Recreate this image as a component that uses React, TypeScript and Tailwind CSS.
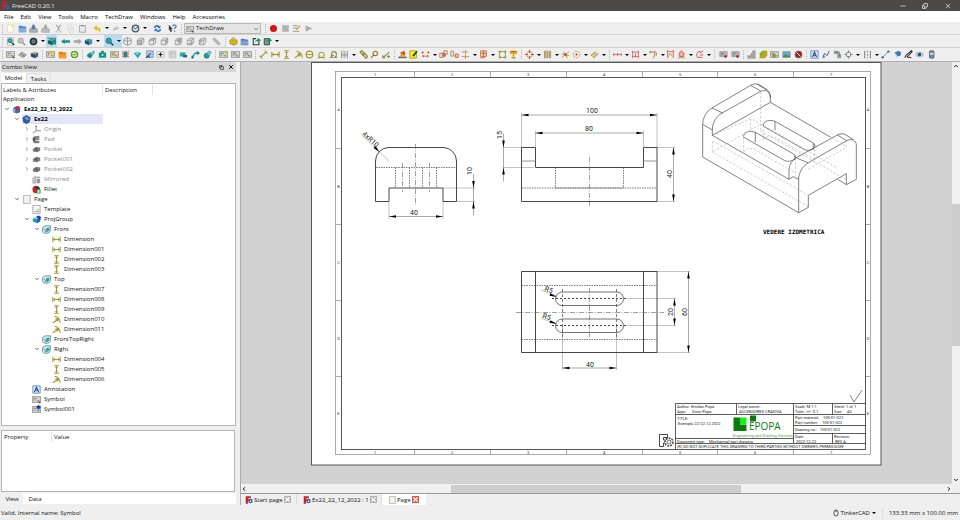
import React, { useState } from 'react';
import { ChevronDown, ChevronRight, ChevronLeft, ChevronUp, Minus, X, Copy } from 'lucide-react';

const cube = (a: string, b: string, c: string) => (
  <>
    <path d="M1 4l4-2 5 1-4 2z" fill={a} />
    <path d="M1 4l5 1v5l-5-2z" fill={b} />
    <path d="M6 5l4-2v5l-4 2z" fill={c} />
  </>
);

const wireCube = (face: string) => (
  <>
    <path d="M1.500 4l3-2.500h5v5l-2.500 3H1.500z" fill="#e3e3e3" />
    <path d={face} fill="#b3b3b3" />
    <path d="M1.500 4l3-2.500h5v5l-2.500 3H1.500zM1.500 4h5.500v5.500M7 4l2.500-2.500" fill="none" stroke="#909090" strokeWidth="0.900" />
  </>
);

const sheet = (
  <>
    <rect x="0.500" y="2" width="10" height="7" fill="#d4d4cf" stroke="#979792" />
    <path d="M2 4h4M2 6h2M6 7h3" stroke="#77776f" fill="none" />
  </>
);

const icons: Record<string, React.ReactNode> = {
  new: <><path d="M2 1h7v9H2z" fill="#fffdf0" stroke="#e0dcc4" /><circle cx="8" cy="2.500" r="1.500" fill="#f7e36a" /></>,
  open: <><path d="M1 2h4l1 1h4v7H1z" fill="#5585bb" /><path d="M1 5h9v5H1z" fill="#86afdc" /></>,
  save: <><path d="M1 6h9v4H1z" fill="#b5b5b0" stroke="#8a8a8a" /><path d="M4 1h3v3h2L5.500 7 2 4h2z" fill="#3d77b8" /></>,
  saveGrey: <><path d="M1 6h9v4H1z" fill="#c4c4c4" stroke="#a0a0a0" /><path d="M4 1h3v3h2L5.500 7 2 4h2z" fill="#a5a5a5" /></>,
  cut: <path d="M3 1l4 7M8 1L4 8M2 9.500h2M7 9.500h2" stroke="#a2a2a2" strokeWidth="1.300" fill="none" />,
  copy: <path d="M2 1h5v6H2zM4 4h5v6H4z" fill="#f2f2f2" stroke="#dadada" />,
  paste: <><path d="M2 2h7v8H2z" fill="#eee" stroke="#9a9a9a" /><path d="M4 1h3v2H4z" fill="#999" /></>,
  undo: <path d="M1 5l3-3v2c4 0 6 2 4 6 0-3-2-3-4-3v1z" fill="#e8c420" stroke="#c9a312" strokeWidth="0.500" />,
  redo: <path d="M10 5L7 2v2C3 4 1 6 3 10c0-3 2-3 4-3v1z" fill="#c2c2c2" />,
  clock: <><circle cx="5.500" cy="5.500" r="4" fill="#dbe0e4" stroke="#4b5862" strokeWidth="1.500" /><path d="M3 4l2.500 2L9 3" stroke="#2e3d4a" fill="none" /></>,
  refresh: <><path d="M1 5c0-4 5-5 7-2l1-1.500V5.200H5.500L6.500 4C5 3 3 3 3 5z" fill="#3a76bd" /><path d="M10 6c0 4-5 5-7 2L2 9.500V5.800h3.500L4.500 7C6 8 8 8 8 6z" fill="#3a76bd" /></>,
  help: <><path d="M1 1l5 5H4l1 3-2 1-1-3-1 1z" fill="#38434c" /><path d="M6 3c0-3 4-2 4 0 0 1-2 1.500-2 3M8 8v1.500" stroke="#2d5f94" strokeWidth="1.300" fill="none" /></>,
  record: <circle cx="5.500" cy="5.500" r="4.300" fill="#d31414" />,
  stop: <path d="M1.500 1.500h8v8h-8z" fill="#b2b2b2" />,
  macro: <><path d="M1 2h6M1 5h5M1 9h8" stroke="#8f8f80" fill="none" /><path d="M5 7l5-5" stroke="#d19a2c" strokeWidth="1.500" /></>,
  play: <path d="M2 1.500l8 4-8 4z" fill="#adadad" />,
  fit: <><path d="M2 1h7v9H2z" fill="#fff" stroke="#9aa" /><circle cx="5" cy="4.500" r="2.500" fill="#2fb5b0" stroke="#175a5c" /><path d="M7 7l3 3" stroke="#222" strokeWidth="1.500" /></>,
  zoomGrey: <><circle cx="4.500" cy="4.500" r="3" fill="#c9c9c9" stroke="#888" /><path d="M7 7l3 3" stroke="#888" strokeWidth="1.500" /></>,
  style: <><circle cx="5.500" cy="5.500" r="4.300" fill="#1f4d4f" stroke="#0f2c2e" /><circle cx="5.500" cy="5.500" r="2.300" fill="#5d9a90" /><circle cx="5.500" cy="5.500" r="1.200" fill="#d22" /></>,
  bbox: <>{cube('#36b07b', '#155e5b', '#1f8a72')}<path d="M.500 1.500h10v8" fill="none" stroke="#1a5a85" /></>,
  back: <path d="M0 5.500L4.500 2v2H11v3H4.500v2z" fill="#17958e" />,
  forward: <path d="M11 5.500L6.500 2v2H1v3h5.500v2z" fill="#a5a5a5" />,
  linkView: cube('#3c93ae', '#29516b', '#4887aa'),
  zoom: <><circle cx="4.500" cy="4.500" r="3.200" fill="#24a9a4" stroke="#186b78" /><path d="M7 7l3 3" stroke="#1c4248" strokeWidth="1.800" /></>,
  iso: <path d="M5.500.800l4.500 2v5l-4.500 2.500L1 7.800v-5zM1 4l4.500 1.500L10 4M5.500 1v9" fill="none" stroke="#8a8a8a" />,
  front: wireCube('M1.500 4h5.500v5.500H1.500z'),
  top: wireCube('M1.500 4l3-2.500h5L7 4z'),
  right: wireCube('M7 4l2.500-2.500v5l-2.500 3z'),
  rear: wireCube('M4 2h5v5H4z'),
  bottom: wireCube('M1.500 9.500l3-3h5l-2.500 3z'),
  left: wireCube('M1.500 4l3-2.500v5l-3 3z'),
  ruler: <path d="M1 3l2-2 7 7-2 2z" fill="#bcbcbc" stroke="#8e8e8e" strokeWidth="0.700" />,
  part: <><path d="M1 4l4-2 5 2v4L6 10 1 8z" fill="#d6b51b" stroke="#8f7b12" strokeWidth="0.700" /><path d="M4 1h3v4H4z" fill="#e8cf3c" stroke="#8f7b12" strokeWidth="0.500" /></>,
  folder: <><path d="M1 2h4l1 1h4v7H1z" fill="#4d7cb0" /><path d="M1 4.500h9V9.500H1z" fill="#7ba3d2" /></>,
  link: <><path d="M5 2H1.500v7.500h7V6" fill="none" stroke="#1d3f39" strokeWidth="1.300" /><path d="M4 7c0-3 1-4 3-4V1l4 3-4 3V5C5.500 5 5 5 4 7z" fill="#1b8f64" /></>,
  linkGroup: <><path d="M1.500 2H8v7.500H1.500z" fill="#7d9a8c" stroke="#1d3f39" /><path d="M4 7c0-3 1-4 3-4V1l4 3-4 3V5C5.500 5 5 5 4 7z" fill="#1b8f64" /></>,
  page: <>{sheet}<path d="M8 8l2 2" stroke="#444" strokeWidth="1.500" /></>,
  pageGrey: <><path d="M1 6l4-3 5 3-4 3z" fill="#c6c6c2" stroke="#777" /><path d="M3 4l5 4" stroke="#555" /></>,
  pageCube: cube('#d8a52d', '#1e4b7a', '#2f6798'),
  view: <>{sheet}<path d="M7 1l1 1.500L10 2 9 4l1 1-2 .500L7 7 6 5 4.500 4 6 3z" fill="#f3cd24" /></>,
  viewFolder: <><path d="M1 2h4l1 1h4v7H1z" fill="#e57c12" /><path d="M1 5h9v5H1z" fill="#f99a25" /></>,
  redraw: <><circle cx="5.500" cy="5.500" r="4" fill="#8ec24a" stroke="#5d9a2b" strokeWidth="1.300" /><path d="M3 5c0-2 4-2 5 0M8 6c0 2-4 2-5 0" stroke="#f3ffe4" fill="none" /></>,
  teal: <><path d="M1 6l4-3 4 2-3 5-4-1z" fill="#148a8c" /><path d="M5 4l5-3v3L7 7z" fill="#57d6d3" stroke="#146668" strokeWidth="0.500" /></>,
  camera: <><path d="M1 3h9v6.500H1z" fill="#12a19b" /><path d="M4 1h3v2H4z" fill="#0c6a69" /><circle cx="5.500" cy="6" r="2" fill="#bff0ee" stroke="#0c5658" /></>,
  sheetYellow: <>{sheet}<path d="M2 6h6" stroke="#d9b413" strokeWidth="2" /></>,
  section: <><path d="M3 2h5v7H3z" fill="#26807f" /><path d="M2 1v9M9 1v9M5.500 1v9" stroke="#cc5a51" strokeDasharray="2 1" /></>,
  detail: <><path d="M1 4l4-2 5 2-4 6z" fill="#16a6a8" /><circle cx="5" cy="4" r="2" fill="#62d8d8" /></>,
  draft: <><path d="M2 1h8v8H2z" fill="#b9c8de" stroke="#7b92b4" /><path d="M1 10l6-6M3 7l3 2" stroke="#234c8c" strokeWidth="1.300" /></>,
  arch: <><path d="M1 2h9v7H1z" fill="#eee" stroke="#bbb" /><path d="M5.500 3v5M3 5.500h5" stroke="#222" strokeWidth="1.500" /></>,
  spread: <><path d="M1.500 1.500h8v8h-8z" fill="#ddd" stroke="#b9b9b9" /><path d="M2 4h7M4.500 2v7" stroke="#bbb" /></>,
  move: <><path d="M1 3h7v5H1z" fill="#22adae" /><path d="M5 6h5v3H5z" fill="#0e6e89" /></>,
  share: <><path d="M1 9l4-5h4" stroke="#1ca1a3" strokeWidth="1.600" fill="none" /><path d="M7 1l4 3-4 2z" fill="#1476a5" /><circle cx="2" cy="9" r="1.500" fill="#0e7173" /></>,
  project: <><circle cx="4.500" cy="7" r="3" fill="#1f9f9f" stroke="#0f6768" /><path d="M4 4l4-3 2 2-3 4z" fill="#53d2cd" stroke="#187072" strokeWidth="0.500" /></>,
  clip: <>{sheet}<path d="M7 1h3v3H7z" fill="#b7d135" /></>,
  clipGrey: <>{sheet}<path d="M4 3l4 5" stroke="#999" strokeWidth="1.500" /></>,
  dimLength: <path d="M2.500 8.500l6-6M.800 7l3.200 3.200M7 .800L10.200 4" stroke="#a8992e" strokeWidth="1.400" fill="none" />,
  dimH: <path d="M1 2v7M10 2v7M1 5.500h9M3 4v3M8 4v3" stroke="#a8992e" strokeWidth="1.300" fill="none" />,
  dimV: <path d="M2.500 1h6M2.500 10h6M5.500 1v9M4 3h3M4 8h3" stroke="#a8992e" strokeWidth="1.300" fill="none" />,
  dimR: <path d="M1 9.500l6-4M3 1.500c4 0 7 4 7 8M4 5l4-.500L6.500 8" stroke="#a8992e" strokeWidth="1.400" fill="none" />,
  dimD: <path d="M5.500 1.500a4 4 0 100 8 4 4 0 000-8zM1.500 5.500h8" stroke="#a8992e" strokeWidth="1.500" fill="none" />,
  dimA: <path d="M3 9c-2-3 0-7 3-6 3 0 4 4 1 6zM1 9.500h3M7 9.500h3" stroke="#a8992e" strokeWidth="1.300" fill="none" />,
  dimA3: <path d="M1 9h3c-2-3-1-7 2-7 4 0 4 5 1 7h3M3 6l3 1" stroke="#93853a" strokeWidth="1.300" fill="none" />,
  dimE: <><path d="M4 1h3v9H4z" fill="#b9c0b6" /><path d="M2 1v9M9 1v9M2 6h7" stroke="#8b948a" strokeWidth="1.200" fill="none" /></>,
  chain: <path d="M1.500 2.500l2-1.500 3 3-2 2zM5 6l2-2 3.500 4-2 2z" stroke="#8c7d22" strokeWidth="1.400" fill="none" />,
  balloon: <path d="M6.500 1.500a2.700 2.700 0 110 5.400 2.700 2.700 0 010-5.400zM4.500 6L1 10" stroke="#8c7d22" strokeWidth="1.400" fill="none" />,
  landmark: <path d="M1 9.500l8-7M1 6.500v3h3M8 6v4M6 8h4" stroke="#93853a" strokeWidth="1.300" fill="none" />,
  hatch: <><path d="M3 3l5-2 1 5-5 2z" fill="#de4d21" /><path d="M.500 8h10v2H.500z" fill="#61715b" /><path d="M2 8l3-4 4 4z" fill="#e6a32c" /></>,
  geomHatch: <><path d="M1 1h8v9H1z" fill="#f7ec28" stroke="#a1981c" /><path d="M4 7l5-6 1.500 1L6 8z" fill="#2c3b1a" /></>,
  redDots: <><path d="M1 7.500h9M3 6v3M8 6v3" stroke="#c97a3c" strokeWidth="1.200" fill="none" /><circle cx="2" cy="3" r="1.200" fill="#e03324" /><circle cx="9" cy="3" r="1.200" fill="#e03324" /></>,
  redCubes: <><path d="M1 4h4v5H1zM6 1h4v4H6z" fill="none" stroke="#bd6a3a" /><circle cx="6" cy="6" r="2.500" fill="#d5654a" /></>,
  boxes: <><path d="M1 1.500h3.500v6H1z" fill="#eee6d0" stroke="#938a4d" /><path d="M6.500 5H10v4H6.500z" fill="#f3d3cd" stroke="#d0453c" /></>,
  extend: <path d="M1 2.500h8M1 8h9M5.500 0v11" stroke="#c08a47" fill="none" />,
  grid: <><path d="M3 1h6v7H3z" fill="#e6cfa8" /><path d="M2 1h7v7H2zM2 4h7M5.500 1v9M1 9.500h6" stroke="#c0673a" fill="none" /></>,
  frame: <><path d="M2 2h7v7H2z" fill="none" stroke="#8f8834" /><path d="M1 1h2v2H1zM8 1h2v2H8zM1 8h2v2H1zM8 8h2v2H8z" fill="#8f8834" /></>,
  weld: <><path d="M1 1h9v4H1z" fill="#f1a616" /><path d="M2 2h7" stroke="#d5351f" /><path d="M5.500 5v5M3 9.500h5" stroke="#a8992e" strokeWidth="1.500" /></>,
  center: <><circle cx="5.500" cy="5.500" r="3.500" fill="none" stroke="#b38b3a" /><path d="M5.500 0v3.500M5.500 7.500V11M0 5.500h3.500M7.500 5.500H11" stroke="#d8432c" strokeWidth="1.300" /></>,
  stripes: <><path d="M1 1h9v9H1z" fill="#c9c4a8" /><path d="M2.500 1v9M8.500 1v9" stroke="#8f8834" strokeWidth="1.300" /><path d="M5.500 1v9" stroke="#d8736a" /></>,
  star: <><path d="M1 9l9-7M3 2l5 8M1 5l9 2" stroke="#9d8c2e" /><circle cx="5.500" cy="5.500" r="1.500" fill="#d8331f" /></>,
  circleRed: <><circle cx="5.500" cy="5.500" r="4" fill="none" stroke="#c98b3a" strokeDasharray="3 1" /><circle cx="5.500" cy="5.500" r="1.300" fill="#d8331f" /></>,
  lines: <><path d="M1 7l6-5M4 10l6-6" stroke="#a8992e" strokeWidth="1.300" fill="none" /><path d="M3 8.500l5-5" stroke="#d8736a" /></>,
  chainH: <path d="M0 5.500h11M1 3.500v4M5.500 3.500v4M10 3.500v4" stroke="#cf6a60" fill="none" />,
  chainC: <path d="M1 2.500h9M1 8h9M2 1v9M5.500 4v5M9 1v9" stroke="#d65a50" fill="none" />,
  chainT: <path d="M0 2.500h8M7 1v5l-2 4M2 1v3M9 3v4" stroke="#c07a43" strokeWidth="1.200" fill="none" />,
  arc: <><path d="M1 2h9M2 0v10M9 0v10" stroke="#d65a50" fill="none" /><path d="M3 8l2-4 3 4" stroke="#a8992e" fill="none" /></>,
  redA: <><path d="M3 8l-.500-4L5.500 1l3 3L8 8z" fill="#eab1a6" stroke="#d0453c" /><path d="M1 9.500h9" stroke="#a8992e" /></>,
  redC: <path d="M7 2H4L2 5l1 4h6M6 4l4-3M6 6h4" stroke="#d65a50" strokeWidth="1.200" fill="none" />,
  plate: <><path d="M1 2h9v6H1z" fill="#b9b9b5" stroke="#999" /><path d="M2 4h5M2 6h3" stroke="#777" /><circle cx="8" cy="8" r="1.800" fill="#b43030" /></>,
  stair: <path d="M1 7h4V4h2V1h3v9H1z" fill="#a4a4a0" stroke="#8b8b86" strokeWidth="0.700" />,
  pattern: <><path d="M1 4l3-3h6v6l-3 3H1z" fill="#98a81d" /><path d="M1 10l9-9M4 10l6-6" stroke="#d4a91b" strokeWidth="1.300" /></>,
  symbol: <>{sheet}<path d="M3 5h4v4H3z" fill="#8b9a2b" /></>,
  image: <><path d="M1 2h9v7H1z" fill="#6ba6d6" stroke="#8c9ba3" /><path d="M1 9l3-4 3 2 2-1 1 3z" fill="#4c8f36" /></>,
  toggle: <><circle cx="5.500" cy="5.500" r="4" fill="#71383a" stroke="#bd2d30" strokeWidth="1.300" /><path d="M3 3l5 5" stroke="#fff" /></>,
  note: <><path d="M1 1h9v9H1z" fill="#dbe6f3" stroke="#5b86b9" /><path d="M3 8.500l2.500-6 2.500 6M4 6.500h3" stroke="#234c86" strokeWidth="1.300" fill="none" /></>,
  leader: <path d="M1 10l2-6 3 3 3-6M1 7l3 2" stroke="#4a6585" strokeWidth="1.200" fill="none" />,
  rich: <><path d="M1 1h6v4H1zM5 5h5v5H5z" fill="#9a9f9f" /><path d="M2 3h6v5" stroke="#6f7676" fill="none" /></>,
  vertex: <><circle cx="5.500" cy="5.500" r="3" fill="none" stroke="#607387" /><path d="M5.500.500v3M5.500 7.500v3M.500 5.500h3M7.500 5.500h3" stroke="#8a8462" strokeWidth="1.500" /></>,
  centerLine: <path d="M2 1v9M9 1v9M5.500 1v2M5.500 5v2M5.500 9v1" stroke="#7a868e" strokeWidth="1.300" fill="none" />,
  line: <><path d="M2 9l7-7" stroke="#6b7480" /><circle cx="2" cy="9" r="1.500" fill="#3f6ca3" /><circle cx="9" cy="2" r="1.500" fill="#3f6ca3" /></>,
  eraser: <><path d="M2 3l5-2 3 2-1 4-4 1z" fill="#3f79b6" /><path d="M3 4l3 4-2 2z" fill="#b8d2ea" /></>,
  pen: <path d="M1 9.500l1.500-3L9 1l1 1-6 6.500 5 1" stroke="#2c2c2c" fill="none" strokeWidth="1.300" />,
  eye: <><path d="M0 5.500c3-4 8-4 11 0-3 4-8 4-11 0z" fill="#c9d6e2" stroke="#8c9caa" strokeWidth="0.700" /><circle cx="5.500" cy="5.500" r="2.200" fill="#244f87" /></>,
  tolerance: <><rect x="3" y="1" width="5.500" height="9" rx="1" fill="#6c8fae" stroke="#54606a" /><path d="M3.500 3.500h4.500v2H3.500z" fill="#dbe2e6" /></>,
  origin: <path d="M5 1v6L1 10M5 7h6M4 2.500L5 1l1 1.500" stroke="#8a8a8a" fill="none" strokeWidth="1.200" />,
  pad: <><path d="M1 2l7-1 2 2-6 1zM1 4h8v2H1zM2 7h7v3H2z" fill="#7c7c7c" /><path d="M1 3h3v5H1z" fill="#555" /></>,
  pocket: <><path d="M1 5l4-3 5 1v4L6 9 1 8z" fill="#7d7d7d" /><path d="M3 5l3-1 1 4" fill="#555" /></>,
  mirrored: <><path d="M1 10V4l4-3v9z" fill="#c4c4c4" stroke="#999" strokeWidth="0.700" /><path d="M6 5h4v5H6zM6 2h4v2H6z" fill="#9a9a9a" /></>,
  fillet: <><circle cx="5" cy="5.500" r="4.500" fill="#c92323" /><path d="M3 3c2-2 6-2 7 2l-4 1z" fill="#2b3d55" /><path d="M6 5h4.500v5.500H6z" fill="#36b44a" /><path d="M7 6.500h2v3H7z" fill="#e7ffe7" /></>,
  doc: <><path d="M2 3l5-2 3 2v6l-4 1.500L2 9z" fill="#416ca1" /><circle cx="7" cy="4" r="2.500" fill="#cf2f2f" /><path d="M1 4l3 1v5L1 8.500z" fill="#8fabce" /></>,
  body: <><path d="M5.500 0l5 3-1 6-4 2-4-2L.500 3z" fill="#2f5d94" /><path d="M3 3l3-1 3 3-3 2z" fill="#6f9ccf" /></>,
  blank: <path d="M2 .500h8v10H2z" fill="#f3f3f1" stroke="#a7a7a7" />,
  template: <><path d="M1 .500h9v10H1z" fill="#f5f5f5" stroke="#a0a0a0" /><path d="M3 8h6M6 6h3" stroke="#999" /></>,
  group: <>{cube('#7fdede', '#1d9fae', '#1466b5')}<path d="M5 2l3-1.500 3 2-1 4z" fill="#1733d1" /></>,
  viewPart: <><path d="M.500 3L4 1h6.500v6L8 10H3L.500 8z" fill="#d5e6e6" stroke="#5c8f94" /><path d="M5 4l4-1v4L5 9z" fill="#24a5ad" /><path d="M2 5l2 1v3" stroke="#6d8b8e" fill="none" /></>,
  symbolBlue: <>{sheet}<path d="M5 2l3-2 3 2-3 4z" fill="#1733d1" /></>,
  app: <><path d="M1 .500h7v2.500H4v1.500h3v2H4v4H1z" fill="#cb1f24" /><circle cx="7.500" cy="7" r="2.200" fill="none" stroke="#355f9f" strokeWidth="1.800" /></>,
};

function Icon({ name, className = 'size-[11px]' }: { name: string; className?: string }) {
  return <svg viewBox="0 0 11 11" className={`shrink-0 ${className}`} aria-hidden="true">{icons[name]}</svg>;
}

const Handle = () => <span className="w-[5px] shrink-0 h-[9px] flex justify-center"><span className="border-l border-dotted border-[#b5b5b5]" /></span>;

// a trailing "+" adds a drop-down arrow, a leading "*" shows the tool as pressed
function Tools({ items, className }: { items: string; className: string }) {
  return (
    <div className={`flex shrink-0 items-center ${className}`}>
      {items.split(' ').map((item, i) => {
        const name = item.replace(/[*+]/g, '');
        const on = item.startsWith('*');
        const menu = item.endsWith('+');
        return (
          <button
            key={i}
            aria-label={name}
            className={`h-[12px] basis-0 flex items-center ${menu ? 'grow-[35] pl-px' : 'grow-[23] justify-center'} ${on ? 'bg-[#b9dcf3]' : ''}`}
          >
            <Icon name={name} className="size-[9px]" />
            {menu && <span className="ml-[3px] border-x-2 border-t-2 border-x-transparent border-t-black" />}
          </button>
        );
      })}
    </div>
  );
}

interface Node {
  label: string;
  icon: string;
  children?: Node[];
  closed?: boolean;
  grey?: boolean;
  bold?: boolean;
  selected?: boolean;
}

const dim = (n: string, icon: string): Node => ({ label: 'Dimension' + n, icon });

const tree: Node[] = [
  {
    label: 'Ex22_22_12_2022', icon: 'doc', bold: true, children: [
      {
        label: 'Ex22', icon: 'body', bold: true, selected: true, children: [
          { label: 'Origin', icon: 'origin', grey: true, closed: true },
          { label: 'Pad', icon: 'pad', grey: true, closed: true },
          { label: 'Pocket', icon: 'pocket', grey: true, closed: true },
          { label: 'Pocket001', icon: 'pocket', grey: true, closed: true },
          { label: 'Pocket002', icon: 'pocket', grey: true, closed: true },
          { label: 'Mirrored', icon: 'mirrored', grey: true },
          { label: 'Fillet', icon: 'fillet' },
        ],
      },
      {
        label: 'Page', icon: 'blank', children: [
          { label: 'Template', icon: 'template' },
          {
            label: 'ProjGroup', icon: 'group', children: [
              { label: 'Front', icon: 'viewPart', children: [dim('', 'dimH'), dim('001', 'dimH'), dim('002', 'dimV'), dim('003', 'dimV')] },
              { label: 'Top', icon: 'viewPart', children: [dim('007', 'dimV'), dim('008', 'dimH'), dim('009', 'dimV'), dim('010', 'dimR'), dim('011', 'dimR')] },
              { label: 'FrontTopRight', icon: 'viewPart' },
              { label: 'Right', icon: 'viewPart', children: [dim('004', 'dimH'), dim('005', 'dimV'), dim('006', 'dimR')] },
            ],
          },
          { label: 'Annotation', icon: 'note' },
          { label: 'Symbol', icon: 'page' },
          { label: 'Symbol001', icon: 'symbolBlue' },
        ],
      },
    ],
  },
];

function TreeItem({ node }: { node: Node }) {
  const [open, setOpen] = useState(!node.closed);
  return (
    <li>
      <div className="flex items-center h-[10px]">
        {node.children || node.closed ? (
          <button aria-label={`Toggle ${node.label}`} onClick={() => setOpen(!open)} className="w-[10px] shrink-0 flex justify-center text-[#444]">
            {open ? <ChevronDown size={6} strokeWidth={3} /> : <ChevronRight size={6} strokeWidth={2} />}
          </button>
        ) : <span className="w-[10px] shrink-0" />}
        <span className={`flex flex-1 items-center gap-[3px] h-[10px] whitespace-nowrap ${node.selected ? 'bg-[#e6e6fa]' : ''} ${node.bold ? 'font-bold text-black' : ''} ${node.grey ? 'text-[#8c8c8c]' : ''}`}>
          <Icon name={node.icon} className="size-[9px]" />
          {node.label}
        </span>
      </div>
      {open && node.children && (
        <ul className="pl-[10px]">
          {node.children.map(child => <TreeItem key={child.label} node={child} />)}
        </ul>
      )}
    </li>
  );
}

// straight dimension line with an arrowhead at both ends
function Dim({ x1, y1, x2, y2, out = 0 }: { x1: number; y1: number; x2: number; y2: number; out?: number }) {
  const vertical = x1 === x2;
  const s = out ? -1 : 1;
  const head = (x: number, y: number, d: number) =>
    vertical ? `M${x} ${y}l-1.300 ${7 * d}h2.600z` : `M${x} ${y}l${7 * d}-1.300v2.600z`;
  return (
    <>
      <path d={`M${x1} ${y1 - (vertical ? out : 0)}L${x2} ${y2 + (vertical ? out : 0)}`} stroke="#555" strokeWidth="0.500" />
      <path d={head(x1, y1, s) + head(x2, y2, -s)} fill="#000" />
    </>
  );
}

const Label = ({ x, y, turn = 0, children }: { x: number; y: number; turn?: number; children: React.ReactNode }) => (
  <text x={x} y={y} transform={`rotate(${turn} ${x} ${y})`} textAnchor="middle" fontSize="7">{children}</text>
);

function Sheet() {
  const cols = [375, 452, 528, 604, 680, 755, 831];
  const rows = [110, 187, 263, 339, 414];
  return (
    <svg viewBox="311 62 571 404" className="w-[571px] shrink-0 block font-['Roboto',sans-serif]" role="img" aria-label="Technical drawing">
      <rect x="311.500" y="62.500" width="569.500" height="402.500" fill="#fff" stroke="#555" />
      <g fill="none" stroke="#888" strokeWidth="0.700">
        <rect x="335.500" y="71.500" width="535" height="383" />
        <path d="M414.500 71.500v6M490.500 71.500v6M566.500 71.500v6M642.500 71.500v6M717.500 71.500v6M793.500 71.500v6M414.500 449v6M490.500 449v6M566.500 449v6M642.500 449v6M717.500 449v6M793.500 449v6" />
        <path d="M335.500 148.500h6M335.500 224.500h6M335.500 300.500h6M335.500 376.500h6M865 148.500h6M865 224.500h6M865 300.500h6M865 376.500h6" />
      </g>
      <rect x="341.500" y="77.500" width="524" height="372" fill="none" stroke="#555" />
      <g fontSize="4" fill="#333" textAnchor="middle">
        {cols.map((x, i) => <g key={x}><text x={x} y="76">{i + 1}</text><text x={x} y="454">{i + 1}</text></g>)}
        {rows.map((y, i) => <g key={y}><text x="338.500" y={y + 1}>{'ABCDE'[i]}</text><text x="868" y={y + 1}>{'ABCDE'[i]}</text></g>)}
      </g>

      {/* thin extension and leader lines */}
      <path
        d="M389 202v17M443 202v17M443 188h32M457 201.500h18M503 147.500h18M503 167.500h31M521.500 113v34M657 113v34M535.500 131v16M643.500 131v16M657 147.500h18M657 201.500h18M562.500 326v44M616.500 326v44M627 298.500h49M627 325.500h49M657 271.500h33M657 352.500h33M361 134l28 27M541 290l15 6M541 318l15 6"
        stroke="#999" strokeWidth="0.600" fill="none"
      />
      <Dim x1={389} y1={216.5} x2={443} y2={216.5} />
      <Dim x1={473.5} y1={188} x2={473.5} y2={201.5} out={14} />
      <Dim x1={503.5} y1={147.5} x2={503.5} y2={167.5} out={14} />
      <Dim x1={521.5} y1={115} x2={657} y2={115} />
      <Dim x1={535.5} y1={133} x2={643.5} y2={133} />
      <Dim x1={673.5} y1={147.5} x2={673.5} y2={201.5} />
      <Dim x1={562.5} y1={368} x2={616.5} y2={368} />
      <Dim x1={674.5} y1={298.5} x2={674.5} y2={325.5} />
      <Dim x1={688.5} y1={271.5} x2={688.5} y2={352.5} />
      <path d="M379.500 152l-6-4 2-2.200zM557 297l-7.500-1.300 1-2.500zM557 324l-7.500-1.300 1-2.500z" />
      <g fill="#222">
        <Label x={414} y={215}>40</Label>
        <Label x={472} y={171} turn={-90}>10</Label>
        <Label x={502} y={135} turn={-90}>15</Label>
        <Label x={592} y={113}>100</Label>
        <Label x={589} y={131}>80</Label>
        <Label x={672} y={174} turn={-90}>40</Label>
        <Label x={590} y={367}>40</Label>
        <Label x={673} y={312} turn={-90}>20</Label>
        <Label x={687} y={312} turn={-90}>60</Label>
        <Label x={369} y={141} turn={42}>4xR10</Label>
        <Label x={548} y={292} turn={20}>R5</Label>
        <Label x={546} y={319} turn={20}>R5</Label>
      </g>

      <g fill="none" stroke="#333" strokeWidth="0.900">
        <path d="M375.500 201.500V161A13.500 13.500 0 01389 147.500h54A13.500 13.500 0 01456.500 161v40.500H443V188h-54v13.500z" />
        <path d="M521.500 201.500v-54h14v20h108v-20H657v54z" />
        <path d="M521.500 161h14M643.500 161H657" stroke="#888" />
        <path d="M521.500 271.500H657v81H521.500zM535.500 271.500v81M643.500 271.500v81" />
        <rect x="555.500" y="292" width="68" height="13.500" rx="6.700" strokeWidth="0.700" />
        <rect x="555.500" y="319" width="68" height="13.500" rx="6.700" strokeWidth="0.700" />
      </g>
      <g fill="none" stroke="#444" strokeWidth="0.700" strokeDasharray="1.500 1">
        <path d="M376 167.500h80M395.500 167.500V188M409.500 167.500V188M422.500 167.500V188M436.500 167.500V188" />
        <path d="M522 188h135M555.500 167.500V188M623.500 167.500V188M555.500 188h68" />
        <path d="M521.500 285.500H657M521.500 339.500H657" />
        <path d="M562.500 289v48M616.500 289v48" strokeDasharray="3 2" />
        <path d="M552 298.500h75M552 325.500h75" strokeWidth="1.200" strokeDasharray="2 2" />
      </g>
      <path
        d="M402.500 163v29M429.500 163v29M415.500 144v61M589.500 157v49M589.500 288v49M516 312.500h148"
        fill="none" stroke="#777" strokeWidth="0.700" strokeDasharray="5 1.500 1 1.500"
      />

      {/* isometric view, drawn in its own units, three to a pixel */}
      <g transform="translate(680 62) scale(.33333)" fill="none" stroke="#444" strokeWidth="2">
        <path d="M68 285V187C68 168 80 146 96 138L212 70c12-6 20-6 28 0l22 14c7 5 9 12 9 22v15" />
        <path d="M97 220v-16c0-22 12-42 31-52L242 88c12-6 29-2 29 20M96 138l32 15M68 187l29 17M212 70l30 17M232 67l30 17M97 220l174-99M97 220l230 132M271 121l180 104M68 285l288 167 29-16v-36l114-65v33l30-16V250c0-14-12-22-29-14l-115 66c-18 12-29 30-29 50v100" />
        <path d="M327 352v-26c0-18 10-32 24-40l121-67c10-5 18-5 26 0l22 14M327 352l13-8 16 8M350 288l35 15M472 219l28 17M473 352l26 16" />
        <path d="M250 190c0-14 20-18 35-12l115 65c10 8 4 20-15 22-6 0-10-1-15-4l-112-64c-5-3-8-4-8-7M285 178v27M400 243v20" />
        <path d="M191 223c0-14 20-18 35-12l115 65c10 8 4 20-15 22-6 0-10-1-15-4l-112-64c-5-3-8-4-8-7M226 211v30M345 280v14" />
        <g stroke="#999" strokeWidth="1.500" strokeDasharray="7 5">
          <path d="M242 90v117M97 220l115-50 30 16M212 170v34l-115 66v-34l288 164M97 270l288 164M242 207l257 146M212 204l30-18 230 132M499 236v20l-115 66M191 225v46M250 190v50M191 271c5-14 25-14 35-8l120 70M250 232c8-12 25-12 35-6l118 66M404 250v58M347 290v50M271 121l228 132" />
        </g>
      </g>
      <text x="763" y="234" fontSize="6" fontWeight="700" className="font-['DejaVu_Sans_Mono',monospace]">VEDERE IZOMETRICA</text>

      <path d="M850 395l4 7 8-12" fill="none" stroke="#666" strokeWidth="0.800" />
      <path d="M659.500 446.500v-12h8v3h-4v2.500h3v3h-3v3.500z" fill="#fff" stroke="#333" strokeWidth="0.900" />
      <circle cx="669" cy="442" r="4" fill="#fff" stroke="#444" strokeWidth="1.500" strokeDasharray="2 1" />
      <circle cx="669" cy="442" r="2" fill="#fff" stroke="#444" strokeWidth="0.800" />

      <g fill="none" stroke="#333" strokeWidth="0.800">
        <path d="M675.500 449V403.500H865M675.500 414.500H865M793.500 425.500H865M793.500 433.500H865M675.500 438.500h118M675.500 443.500H865M736.500 403.500v11M793.500 403.500v40M832.500 403.500v11M832.500 433.500v10" />
      </g>
      <g fontSize="4" fill="#222">
        <text x="677" y="407.500">Author: Emilian Popa</text>
        <text x="677" y="413">Appr.:</text>
        <text x="692" y="413">Sorin Popa</text>
        <text x="738" y="407.500">Legal owner:</text>
        <text x="739" y="413">ASCENSOREX CRAIOVA</text>
        <text x="795" y="407.500">Scale: M 1:1</text>
        <text x="795" y="413">Toler.: +/- 0.1</text>
        <text x="834" y="407.500">Sheet: 1 of 1</text>
        <text x="834" y="413">Size:</text>
        <text x="847" y="413">A3</text>
        <text x="795" y="418.500">Part material:</text>
        <text x="823" y="418.500">100-01-022</text>
        <text x="795" y="424">Part number:</text>
        <text x="822" y="424">100-01-022</text>
        <text x="795" y="431">Drawing no.:</text>
        <text x="820" y="431">100-01-022</text>
        <text x="795" y="437.500">Date:</text>
        <text x="796" y="442.500">2022-12-22</text>
        <text x="834" y="437.500">Revision:</text>
        <text x="835" y="442.500">REV A</text>
        <text x="677" y="419.500">TITLE:</text>
        <text x="678" y="425">Exemplu 22/22.12.2022</text>
        <text x="677" y="442.500">Document type:</text>
        <text x="709" y="442.500">Mechanical part drawing</text>
        <text x="677" y="448">(R) DO NOT DUPLICATE THIS DRAWING TO THIRD PARTIES WITHOUT OWNER'S PERMISSION!</text>
      </g>
      <path d="M733.500 417.500h6.500v7h6.500v6.500h-13z" fill="#0b7a10" />
      <path d="M740 417.500h6.500v6.500H740z" fill="#16f01b" />
      <path d="M750 415.500h6v6h-6z" fill="#0b7a10" />
      <text x="749" y="430" fontSize="10" fill="#0b7a10" className="font-['Open_Sans',sans-serif]">EPOPA</text>
      <text x="733" y="437" fontSize="4" fill="#4da850">Engineering and Drafting Services</text>
    </svg>
  );
}

const menus = ['File', 'Edit', 'View', 'Tools', 'Macro', 'TechDraw', 'Windows', 'Help', 'Accessories'];

export default function App() {
  return (
    <div className="h-screen flex flex-col overflow-hidden bg-[#efefef] text-[#111] text-[6px] leading-[10px] font-['Open_Sans','Noto_Sans',sans-serif]">
      <header className="h-[11px] shrink-0 bg-[#4b4948] text-[#eee] flex items-center pl-px">
        <Icon name="app" className="size-[9px]" />
        <span className="pl-[2px] flex-1">FreeCAD 0.20.1</span>
        <button aria-label="Minimize" className="w-[23px] flex justify-center"><Minus size={8} /></button>
        <button aria-label="Restore" className="w-[22px] flex justify-center"><Copy size={6} strokeWidth={3} className="-scale-x-100 rotate-180" /></button>
        <button aria-label="Close" className="w-[24px] flex justify-center"><X size={8} /></button>
      </header>

      <nav className="h-[11px] shrink-0 bg-white flex items-center gap-[7px] pl-[4px] text-black">
        {menus.map(m => <button key={m}>{m}</button>)}
      </nav>

      <div className="h-[13px] shrink-0 flex items-center border-b border-[#d0d0d0]">
        <Handle />
        <Tools items="new open save saveGrey" className="w-[46px]" />
        <Tools items="cut copy paste" className="w-[35px] ml-[2px]" />
        <Tools items="undo+ redo+" className="w-[36px] ml-[4px]" />
        <Tools items="clock+" className="w-[18px] ml-[2px]" />
        <Tools items="refresh" className="w-[12px] ml-[3px]" />
        <Tools items="help" className="w-[12px] ml-[3px]" />
        <span className="w-px" />
        <Handle />
        <div className="relative w-[77px] shrink-0">
          <Icon name="page" className="size-[8px] absolute left-[2px] top-[2px]" />
          <select aria-label="Workbench" className="appearance-none w-full h-[11px] border border-[#b8b8b8] bg-[#e4e4e4] pl-[11px] block leading-[9px]">
            <option>TechDraw</option>
          </select>
          <ChevronDown size={6} className="absolute right-[2px] top-[3px] pointer-events-none" />
        </div>
        <span className="w-[2px]" />
        <Handle />
        <Tools items="record stop macro play" className="w-[46px]" />
      </div>

      <div className="h-[13px] shrink-0 flex items-center border-b border-[#d0d0d0]">
        <Handle />
        <Tools items="fit zoomGrey style+ *bbox" className="w-[52px]" />
        <Tools items="back forward linkView+" className="w-[41px] ml-[3px]" />
        <Tools items="*zoom+ iso" className="w-[29px] ml-[3px]" />
        <Tools items="front top right" className="w-[35px] ml-[2px]" />
        <Tools items="rear bottom left" className="w-[35px] ml-[3px]" />
        <Tools items="ruler" className="w-[12px] ml-[2px]" />
        <span className="w-px" />
        <Handle />
        <Tools items="part folder link linkGroup+" className="w-[52px]" />
      </div>

      <div className="h-[14px] shrink-0 flex items-center border-b border-[#b0b0b0] overflow-hidden">
        <Handle />
        <Tools items="page pageGrey pageCube" className="w-[35px]" />
        <Handle />
        <Tools items="view viewFolder redraw" className="w-[35px]" />
        <Handle />
        <Tools items="teal camera sheetYellow section detail draft arch spread move share project" className="w-[128px]" />
        <Handle />
        <Tools items="clip clipGrey clipGrey" className="w-[35px]" />
        <Handle />
        <Tools items="dimLength dimH dimV dimR dimD dimA dimA3 dimE+ chain balloon landmark" className="w-[134px]" />
        <Handle />
        <Tools items="hatch geomHatch redDots+ redCubes boxes extend+ grid+ frame weld" className="w-[122px]" />
        <Handle />
        <Tools items="center+ stripes+ star circleRed+ lines+" className="w-[83px]" />
        <Handle />
        <Tools items="chainH+ chainC+ chainT+ arc redA+ redC+" className="w-[100px]" />
        <Handle />
        <Tools items="plate plate" className="w-[24px]" />
        <Handle />
        <Tools items="stair pattern symbol image toggle" className="w-[58px]" />
        <Handle />
        <Tools items="note leader rich vertex+ centerLine+ line eraser pen eye tolerance" className="w-[128px]" />
      </div>

      <div className="flex flex-1 min-h-0">
        <aside className="w-[240px] shrink-0 flex flex-col pl-px pr-[4px]">
          <div className="h-[10px] shrink-0 bg-[#d6d6d6] flex items-center pl-px">
            <h2 className="flex-1">Combo View</h2>
            <button aria-label="Float" className="w-[10px] flex justify-center"><Copy size={5} strokeWidth={3} /></button>
            <button aria-label="Close panel" className="w-[10px] flex justify-center"><X size={6} strokeWidth={4} /></button>
          </div>
          <div className="h-[11px] shrink-0 flex items-stretch pt-px">
            <button className="w-[25px] bg-white">Model</button>
            <button className="w-[25px] border border-[#e0e0e0] border-b-0">Tasks</button>
          </div>
          <div className="flex-1 min-h-0 bg-white border border-[#b4b4b4] overflow-hidden">
            <div className="flex h-[11px] items-center">
              <span className="w-[101px] pl-px border-r border-[#e2e2e2]">Labels &amp; Attributes</span>
              <span className="w-[50px] pl-[2px] border-r border-[#e2e2e2]">Description</span>
            </div>
            <div className="w-[101px]">
              <p className="pl-px h-[9px] leading-[9px]">Application</p>
              <ul>{tree.map(n => <TreeItem key={n.label} node={n} />)}</ul>
            </div>
          </div>
          <div className="h-[62px] shrink-0 mt-[4px] mr-px bg-white border border-[#b4b4b4]">
            <div className="flex h-[12px] items-center">
              <span className="w-[50px] pl-[2px] border-r border-[#e2e2e2]">Property</span>
              <span className="pl-[2px]">Value</span>
            </div>
          </div>
          <div className="h-[11px] shrink-0 mt-px mb-px bg-white flex">
            <button className="w-[22px] bg-[#f0f0f0]">View</button>
            <button className="w-[24px] bg-white">Data</button>
          </div>
        </aside>

        <main className="flex-1 min-w-0 flex flex-col border-l border-[#aaa]">
          <div className="flex flex-1 min-h-0">
            <div className="flex-1 min-w-0 flex flex-col bg-[#d2d2d2]">
              <div className="flex-1 min-h-0 flex justify-center items-start overflow-hidden"><Sheet /></div>
            </div>
            <div className="w-[8px] shrink-0 bg-[#f0f0f0] flex flex-col items-center justify-between py-px">
              <ChevronUp size={6} strokeWidth={4} />
              <div className="flex-1 w-full flex flex-col">
                <span className="flex-[135]" />
                <span className="flex-[142] bg-[#cdcdcd]" />
                <span className="flex-[131]" />
              </div>
              <ChevronDown size={6} strokeWidth={4} />
            </div>
          </div>
          <div className="h-[9px] shrink-0 mr-[8px] flex items-center bg-[#f0f0f0]">
            <ChevronLeft size={6} strokeWidth={4} />
            <div className="flex-1 h-[8px] flex">
              <span className="flex-[204]" />
              <span className="flex-[289] bg-[#cdcdcd]" />
              <span className="flex-[205]" />
            </div>
            <ChevronRight size={6} strokeWidth={4} />
          </div>
          <div className="h-[12px] shrink-0 flex items-stretch border-t border-[#999] whitespace-nowrap">
            <div className="w-[56px] flex items-center gap-px pl-[4px] border-r border-[#ddd]">
              <Icon name="app" className="size-[8px]" />
              <button>Start page</button>
              <button aria-label="Close Start page" className="bg-[#b3b3b3] text-white"><X size={7} strokeWidth={4} /></button>
            </div>
            <div className="w-[85px] flex items-center gap-px pl-[6px] border-r border-[#ddd]">
              <Icon name="app" className="size-[8px]" />
              <button>Ex22_22_12_2022 : 1</button>
              <button aria-label="Close document" className="bg-[#b3b3b3] text-white"><X size={7} strokeWidth={4} /></button>
            </div>
            <div className="w-[44px] flex items-center gap-px pl-[6px] bg-white">
              <Icon name="blank" className="size-[8px]" />
              <button>Page</button>
              <button aria-label="Close Page" className="bg-[#e2563f] text-white"><X size={7} strokeWidth={4} /></button>
            </div>
          </div>
        </main>
      </div>

      <footer className="h-[15px] shrink-0 flex items-center pl-px pr-[2px]">
        <span className="flex-1">Valid, Internal name: Symbol</span>
        <button className="flex items-center gap-[2px] pr-[6px] border-r border-[#ddd]">
          <svg viewBox="0 0 6 8" className="w-[6px] h-[8px]" aria-hidden="true"><rect x="1" y="1" width="4" height="6" rx="2" fill="none" stroke="#333" strokeWidth="0.800" /><path d="M3 1v2" stroke="#333" strokeWidth="0.800" /></svg>
          TinkerCAD
          <span className="border-x-2 border-t-2 border-x-transparent border-t-black" />
        </button>
        <span className="pl-[6px]">133.33 mm x 100.00 mm</span>
      </footer>
    </div>
  );
}
